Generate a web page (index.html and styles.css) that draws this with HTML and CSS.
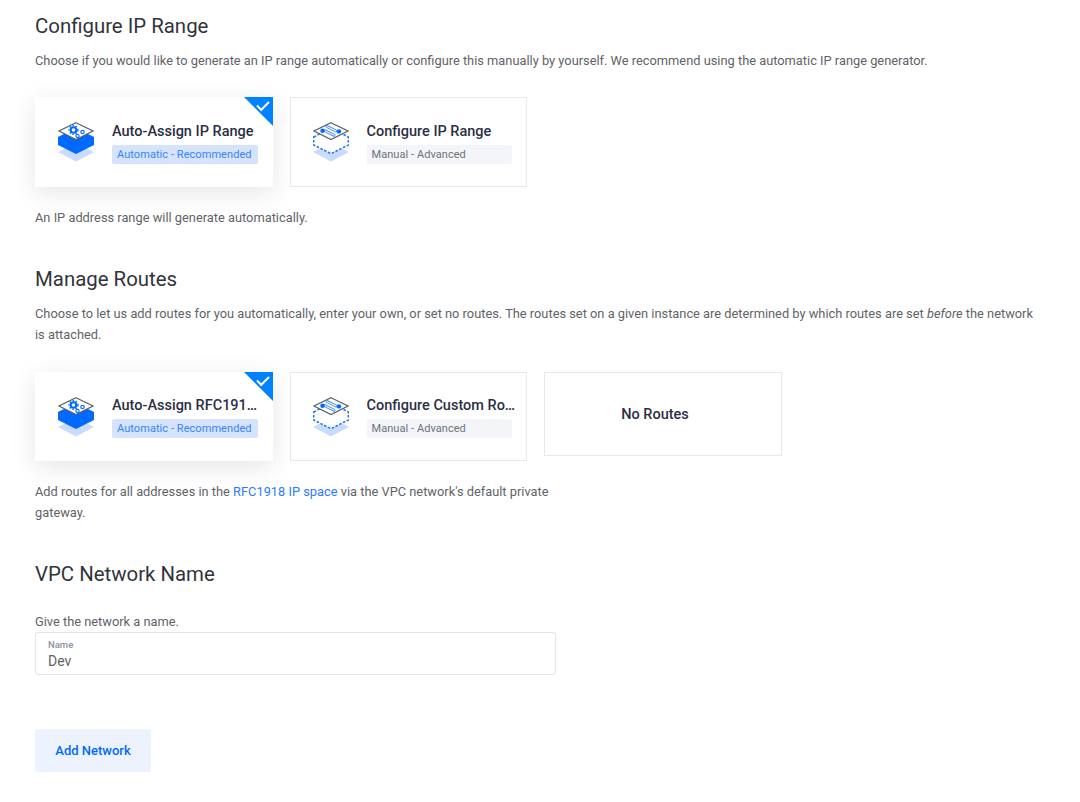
FILE: index.html
```html
<!DOCTYPE html>
<html lang="en"><head><meta charset="utf8">
<title>Add VPC Network</title>
<link rel="stylesheet" href="styles.css">
</head><body>
<svg class="defs" width="0" height="0">
    <defs>
        <symbol id="icon-auto" viewBox="0 0 36 40">
            <path d="M0 30 L18 21 L36 30 L18 39.5 Z" fill="#c9dbff"/>
            <path d="M0 15 L18 6 L36 15 V23 L18 32 L0 23 Z" fill="#0069ff"/>
            <path d="M18 .7 L35 9 L18 17.5 L1 9 Z" fill="#fff" stroke="#5b6270" stroke-width="1.2"/>
            <circle cx="15.5" cy="8" r="2.8" fill="none" stroke="#0069ff" stroke-width="2"/>
            <circle cx="15.5" cy="8" r="4.4" fill="none" stroke="#0069ff" stroke-width="1.3" stroke-dasharray="1.5 1.7"/>
            <circle cx="24.5" cy="10" r="1.7" fill="none" stroke="#1a73f0" stroke-width="1.2"/>
            <circle cx="19.5" cy="14" r="1.6" fill="none" stroke="#1a73f0" stroke-width="1.2"/>
        </symbol>
        <symbol id="icon-manual" viewBox="0 0 36 40">
            <path d="M0 30 L18 21 L36 30 L18 39.5 Z" fill="#c9dbff"/>
            <path d="M.7 15 L18 6 L35.3 15 V23 L18 31.7 L.7 23 Z" fill="#fff" stroke="#1a73f0" stroke-width="1.5" stroke-dasharray="2.6 1.6"/>
            <path d="M18 .7 L35 9 L18 17.5 L1 9 Z" fill="#fff" stroke="#5b6270" stroke-width="1.2"/>
            <path d="M14 4.6 L23 9 M12 8.8 L21 13.2" stroke="#1a73f0" stroke-width="2.8" stroke-linecap="round" fill="none"/>
            <path d="M14 4.6 L23 9 M12 8.8 L21 13.2" stroke="#e3edff" stroke-width="1.5" stroke-linecap="round" fill="none"/>
            <circle cx="9.5" cy="8.8" r="2.2" fill="#0069ff"/>
            <circle cx="26" cy="9.4" r="2.2" fill="#0069ff"/>
        </symbol>
    </defs>
</svg>
<main class="page">
    <section class="block block-range">
        <h2>Configure IP Range</h2>
        <p>Choose if you would like to generate an IP range automatically or configure this manually by yourself. We recommend using the automatic IP range generator.</p>
        <div class="cards">
            <div class="card selected">
                <svg class="card-icon"><use href="#icon-auto"/></svg>
                <div class="card-body">
                    <div class="card-title">Auto-Assign IP Range</div>
                    <div class="tag">Automatic - Recommended</div>
                </div>
            </div>
            <div class="card">
                <svg class="card-icon"><use href="#icon-manual"/></svg>
                <div class="card-body">
                    <div class="card-title">Configure IP Range</div>
                    <div class="tag">Manual - Advanced</div>
                </div>
            </div>
        </div>
        <p class="note">An IP address range will generate automatically.</p>
    </section>
    <section class="block block-routes">
        <h2>Manage Routes</h2>
        <p>Choose to let us add routes for you automatically, enter your own, or set no routes. The routes set on a given instance are determined by which routes are set <em>before</em> the network is attached.</p>
        <div class="cards">
            <div class="card selected">
                <svg class="card-icon"><use href="#icon-auto"/></svg>
                <div class="card-body">
                    <div class="card-title">Auto-Assign RFC1918 Routes</div>
                    <div class="tag">Automatic - Recommended</div>
                </div>
            </div>
            <div class="card">
                <svg class="card-icon"><use href="#icon-manual"/></svg>
                <div class="card-body">
                    <div class="card-title">Configure Custom Routes</div>
                    <div class="tag">Manual - Advanced</div>
                </div>
            </div>
            <div class="card card-plain">
                <div class="card-title">No Routes</div>
            </div>
        </div>
        <p class="note note-narrow">Add routes for all addresses in the <a href="#">RFC1918 IP space</a> via the VPC network's default private gateway.</p>
    </section>
    <section class="block block-name">
        <h2>VPC Network Name</h2>
        <p class="name-help">Give the network a name.</p>
        <div class="field">
            <label>Name</label>
            <div class="field-value">Dev</div>
        </div>
    </section>
    <button class="submit">Add Network</button>
</main>
</body></html>
```
FILE: styles.css
```css
body {
    margin: 0;
    background: #fff;
    font-family: Roboto, "Liberation Sans", sans-serif;
    color: #5b6270;
}

.defs {
    position: absolute;
}

.page {
    padding: 14px 35px 0;
}

h2 {
    margin: 0;
    font-size: 20.4px;
    line-height: 24px;
    font-weight: 400;
    color: #31343c;
}

p {
    margin: 12px 0 0;
    font-size: 12.83px;
    line-height: 21px;
    color: #5f6368;
}

.block-routes {
    margin-top: 39px;
}

.block-name {
    margin-top: 39px;
}

.cards {
    display: flex;
    gap: 17px;
    margin-top: 26px;
}

.block-routes .cards {
    margin-top: 27px;
}

.card {
    position: relative;
    box-sizing: border-box;
    width: 237.5px;
    height: 90px;
    display: flex;
    align-items: center;
    padding: 0 14px 0 22px;
    border: 1px solid #e8e9ec;
    background: #fff;
}

.block-routes .card {
    height: 89px;
}

.card.selected {
    border-color: #fff;
    box-shadow: 0 6px 24px rgba(0, 0, 0, 0.1);
}

/* corner flag with the tick */
.card.selected::before {
    content: "";
    position: absolute;
    top: -1px;
    right: -1px;
    border-style: solid;
    border-width: 0 29px 29px 0;
    border-color: transparent #0081ff transparent transparent;
}

.card.selected::after {
    content: "";
    position: absolute;
    top: 3px;
    right: 3px;
    width: 10px;
    height: 5px;
    border-left: 2px solid #fff;
    border-bottom: 2px solid #fff;
    transform: rotate(-45deg);
}

.card-icon {
    width: 36px;
    height: 40px;
    flex: none;
    margin-right: 18px;
}

.card-body {
    min-width: 0;
    flex: 1;
    padding-top: 3px;
}

.block-routes .card-body {
    padding-top: 1px;
}

.card-title {
    margin-right: -4px;
    font-size: 14.5px;
    line-height: 18px;
    font-weight: 500;
    color: #2b2f45;
    white-space: nowrap;
    overflow: hidden;
    text-overflow: ellipsis;
}

.tag {
    margin-top: 4px;
    padding: 0 5px;
    font-size: 11px;
    line-height: 19px;
    letter-spacing: 0.06px;
    border-radius: 2px;
    background: #f3f5f9;
    color: #6d727b;
}

.selected .tag {
    background: #d6e3fd;
    color: #3583ff;
}

.block-routes .card-plain {
    justify-content: center;
    padding: 2px 15.5px 0 0;
    height: 84px;
}

.card-plain .card-title {
    margin-right: 0;
}

.note {
    margin-top: 20px;
}

.note-narrow {
    max-width: 530px;
}

.note a {
    color: #2c7bff;
    text-decoration: none;
}

.name-help {
    margin-top: 27px;
    margin-bottom: 1px;
    line-height: 18px;
}

.field {
    box-sizing: border-box;
    width: 521px;
    height: 43px;
    padding: 6px 12px 0;
    border: 1px solid #e3e4e8;
    border-radius: 3px;
}

.field label {
    display: block;
    font-size: 9.5px;
    line-height: 11px;
    font-weight: 500;
    color: #8b90a0;
}

.field-value {
    margin-top: 3px;
    font-size: 14px;
    line-height: 16px;
    color: #5f6368;
}

.submit {
    display: block;
    width: 116px;
    height: 43px;
    margin-top: 54px;
    padding: 0;
    border: 0;
    border-radius: 3px;
    background: #ecf3ff;
    color: #0069ff;
    font-family: inherit;
    font-size: 13px;
    font-weight: 500;
}
```
